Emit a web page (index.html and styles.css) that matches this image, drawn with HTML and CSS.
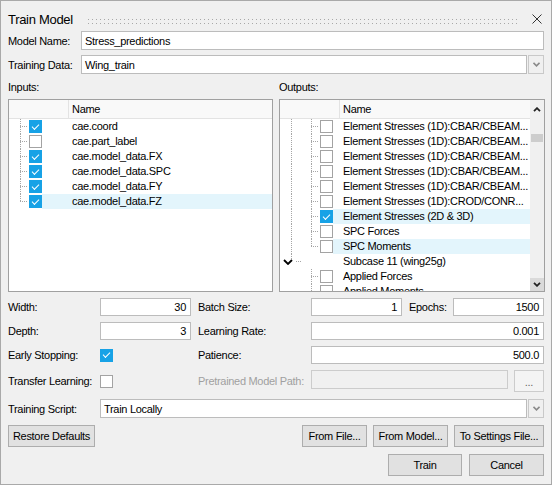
FILE: index.html
```html
<!DOCTYPE html>
<html>
<head>
<meta charset="utf-8">
<title>Train Model</title>
<link rel="stylesheet" href="styles.css">
</head>
<body>
<div class="win">
  <div class="titlebar">
    <span class="title">Train Model</span>
    <span class="grip"></span>
    <svg class="close" width="10" height="10" viewBox="0 0 10 10"><path d="M0.5 0.5L9.5 9.5M9.5 0.5L0.5 9.5" stroke="#333" stroke-width="1" fill="none"/></svg>
  </div>

  <div class="field">
    <span class="flabel">Model Name:</span>
    <div class="tb grow">Stress_predictions</div>
  </div>
  <div class="field">
    <span class="flabel">Training Data:</span>
    <div class="tb grow">Wing_train</div>
    <div class="drop"><svg width="7" height="5" viewBox="0 0 7 5"><path d="M0.5 0.8L3.5 3.8L6.5 0.8" stroke="#8a8a8a" stroke-width="1.6" fill="none"/></svg></div>
  </div>

  <div class="lists">
    <div class="col in">
      <div class="cap">Inputs:</div>
      <div class="table">
        <div class="tmain">
          <div class="thead"><span class="hgut"></span><span class="hname">Name</span></div>
          <div class="row"><span class="g in-leaf"><span class="cb on"></span><span class="fill"></span></span><span class="txt">cae.coord</span></div>
          <div class="row"><span class="g in-leaf"><span class="cb"></span><span class="fill"></span></span><span class="txt">cae.part_label</span></div>
          <div class="row"><span class="g in-leaf"><span class="cb on"></span><span class="fill"></span></span><span class="txt">cae.model_data.FX</span></div>
          <div class="row"><span class="g in-leaf"><span class="cb on"></span><span class="fill"></span></span><span class="txt">cae.model_data.SPC</span></div>
          <div class="row"><span class="g in-leaf"><span class="cb on"></span><span class="fill"></span></span><span class="txt">cae.model_data.FY</span></div>
          <div class="row sel"><span class="g in-last"><span class="cb on"></span><span class="fill"></span></span><span class="txt">cae.model_data.FZ</span></div>
        </div>
      </div>
    </div>
    <div class="col out">
      <div class="cap">Outputs:</div>
      <div class="table">
        <div class="tmain">
          <div class="thead"><span class="hgut"></span><span class="hname">Name</span></div>
          <div class="row"><span class="g o-leaf"><span class="cb"></span><span class="fill"></span></span><span class="txt">Element Stresses (1D):CBAR/CBEAM...</span></div>
          <div class="row"><span class="g o-leaf"><span class="cb"></span><span class="fill"></span></span><span class="txt">Element Stresses (1D):CBAR/CBEAM...</span></div>
          <div class="row"><span class="g o-leaf"><span class="cb"></span><span class="fill"></span></span><span class="txt">Element Stresses (1D):CBAR/CBEAM...</span></div>
          <div class="row"><span class="g o-leaf"><span class="cb"></span><span class="fill"></span></span><span class="txt">Element Stresses (1D):CBAR/CBEAM...</span></div>
          <div class="row"><span class="g o-leaf"><span class="cb"></span><span class="fill"></span></span><span class="txt">Element Stresses (1D):CBAR/CBEAM...</span></div>
          <div class="row"><span class="g o-leaf"><span class="cb"></span><span class="fill"></span></span><span class="txt">Element Stresses (1D):CROD/CONR...</span></div>
          <div class="row sel"><span class="g o-leaf"><span class="cb on"></span><span class="fill"></span></span><span class="txt">Element Stresses (2D &amp; 3D)</span></div>
          <div class="row"><span class="g o-leaf"><span class="cb"></span><span class="fill"></span></span><span class="txt">SPC Forces</span></div>
          <div class="row sel"><span class="g o-last"><span class="cb"></span><span class="fill"></span></span><span class="txt">SPC Moments</span></div>
          <div class="row"><span class="g o-sub"><svg class="chev" width="10" height="6" viewBox="0 0 10 6"><path d="M1 1L5 5L9 1" stroke="#000" stroke-width="1.8" fill="none"/></svg></span><span class="txt">Subcase 11 (wing25g)</span></div>
          <div class="row"><span class="g o-leaf2"><span class="cb"></span><span class="fill"></span></span><span class="txt">Applied Forces</span></div>
          <div class="row"><span class="g o-leaf2"><span class="cb"></span><span class="fill"></span></span><span class="txt">Applied Moments</span></div>
        </div>
        <div class="sbar">
          <div class="sb-up"><svg width="8" height="5" viewBox="0 0 8 5"><path d="M1 4.2L4 1.2L7 4.2" stroke="#222" stroke-width="1.8" fill="none"/></svg></div>
          <div class="sb-gap"></div>
          <div class="sb-thumb"></div>
          <div class="sb-fill"></div>
          <div class="sb-down"><svg width="8" height="5" viewBox="0 0 8 5"><path d="M1 0.8L4 3.8L7 0.8" stroke="#222" stroke-width="1.8" fill="none"/></svg></div>
        </div>
      </div>
    </div>
  </div>

  <div class="params">
    <span class="plabel">Width:</span>
    <div class="tb num">30</div>
    <span class="plabel mid">Batch Size:</span>
    <div class="rcell">
      <div class="tb num w91">1</div>
      <span class="eplabel">Epochs:</span>
      <div class="tb num w91 push">1500</div>
    </div>

    <span class="plabel">Depth:</span>
    <div class="tb num">3</div>
    <span class="plabel mid">Learning Rate:</span>
    <div class="tb num">0.001</div>

    <span class="plabel">Early Stopping:</span>
    <div class="cbcell"><span class="cb on"></span></div>
    <span class="plabel mid">Patience:</span>
    <div class="tb num">500.0</div>

    <span class="plabel">Transfer Learning:</span>
    <div class="cbcell"><span class="cb"></span></div>
    <span class="plabel mid dis">Pretrained Model Path:</span>
    <div class="rcell top">
      <div class="tb grow disabled"></div>
      <div class="btn browse">...</div>
    </div>
  </div>

  <div class="field script">
    <span class="flabel wide">Training Script:</span>
    <div class="tb grow">Train Locally</div>
    <div class="drop"><svg width="7" height="5" viewBox="0 0 7 5"><path d="M0.5 0.8L3.5 3.8L6.5 0.8" stroke="#8a8a8a" stroke-width="1.6" fill="none"/></svg></div>
  </div>

  <div class="btnrow">
    <div class="btn b-restore">Restore Defaults</div>
    <div class="spacer"></div>
    <div class="btn b-file">From File...</div>
    <div class="btn b-model">From Model...</div>
    <div class="btn b-settings">To Settings File...</div>
  </div>
  <div class="btnrow end">
    <div class="btn b-train">Train</div>
    <div class="btn b-cancel">Cancel</div>
  </div>
</div>
</body>
</html>
```
FILE: styles.css
```css
* { box-sizing: border-box; }
html, body { margin: 0; padding: 0; background: #f0f0f0; }
body {
  font-family: "Liberation Sans", Arial, sans-serif;
  font-size: 11px;
  letter-spacing: -0.3px;
  color: #000;
}
.win {
  width: 552px;
  height: 485px;
  border: 1px solid #a9a9a9;
  padding: 6px 7px 0 7px;
  background: #f0f0f0;
  display: flex;
  flex-direction: column;
}
.titlebar { height: 24px; display: flex; align-items: center; flex: none; }
.title { font-size: 13px; width: 80px; flex: none; }
.grip {
  flex: 1;
  height: 5px;
  margin-top: 4px;
  background-image:
    repeating-linear-gradient(to right, #a8a8a8 0 1px, transparent 1px 4px),
    repeating-linear-gradient(to right, #a8a8a8 0 1px, transparent 1px 4px);
  background-size: 100% 1px, 100% 1px;
  background-position: 0 0, 0 4px;
  background-repeat: no-repeat;
}
.close { margin-left: 14px; margin-right: 2px; flex: none; }

.field { display: flex; height: 19px; flex: none; }
.field + .field { margin-top: 5px; }
.flabel { width: 73px; flex: none; display: flex; align-items: center; white-space: nowrap; }
.flabel.wide { width: 92px; }
.tb {
  background: #fff;
  border: 1px solid #bcbcbc;
  padding: 0 3px;
  display: flex;
  align-items: center;
  white-space: nowrap;
  overflow: hidden;
}
.grow { flex: 1; min-width: 0; }
.drop {
  width: 16px;
  margin-left: 1px;
  border: 1px solid #c9c9c9;
  background: #f0f0f0;
  display: flex;
  align-items: center;
  justify-content: center;
  flex: none;
}

.lists { display: flex; gap: 6px; margin-top: 6px; flex: none; }
.col { display: flex; flex-direction: column; }
.col.in { width: 265px; flex: none; }
.col.out { flex: 1; min-width: 0; margin-right: -1px; }
.cap { height: 15px; line-height: 15px; margin-bottom: 4px; }
.table {
  height: 193px;
  border: 1px solid #a0a0a0;
  background: #fff;
  display: flex;
}
.tmain { flex: 1; min-width: 0; display: flex; flex-direction: column; overflow: hidden; }
.thead {
  height: 19px;
  flex: none;
  display: flex;
  background: #f9f9f9;
  border-bottom: 1px solid #e3e3e3;
}
.hgut { width: 60px; flex: none; border-right: 1px solid #e3e3e3; }
.hname { padding-left: 3px; display: flex; align-items: center; }
.row { height: 15px; flex: none; display: flex; align-items: center; }
.row.sel .txt, .row.sel .fill { background: #e3f5fc; }
.fill { flex: 1; align-self: stretch; }
.txt {
  flex: 1;
  min-width: 0;
  padding-left: 3px;
  line-height: 15px;
  white-space: nowrap;
  overflow: hidden;
  text-overflow: ellipsis;
}
.g {
  width: 60px;
  height: 15px;
  flex: none;
  display: flex;
  align-items: center;
  background-repeat: no-repeat;
}
.in-leaf, .in-last, .o-leaf, .o-last, .o-sub, .o-leaf2 {
  --dv: repeating-linear-gradient(to bottom, #a6a6a6 0 1px, transparent 1px 2px);
  --dh: repeating-linear-gradient(to right, #a6a6a6 0 1px, transparent 1px 2px);
}
.in-leaf {
  background-image: var(--dv), var(--dh);
  background-size: 1px 15px, 8px 1px;
  background-position: 11px 0, 11px 7px;
}
.in-last {
  background-image: var(--dv), var(--dh);
  background-size: 1px 8px, 8px 1px;
  background-position: 11px 0, 11px 7px;
}
.in-leaf .cb, .in-last .cb { margin-left: 20px; }
.o-leaf {
  background-image: var(--dv), var(--dv), var(--dh);
  background-size: 1px 15px, 1px 15px, 8px 1px;
  background-position: 11px 0, 31px 0, 31px 7px;
}
.o-last {
  background-image: var(--dv), var(--dv), var(--dh);
  background-size: 1px 15px, 1px 8px, 8px 1px;
  background-position: 11px 0, 31px 0, 31px 7px;
}
.o-sub {
  background-image: var(--dv), var(--dh);
  background-size: 1px 6px, 6px 1px;
  background-position: 11px 0, 16px 7px;
}
.o-leaf2 {
  background-image: var(--dv), var(--dh);
  background-size: 1px 15px, 8px 1px;
  background-position: 31px 0, 31px 7px;
}
.o-leaf .cb, .o-last .cb, .o-leaf2 .cb { margin-left: 40px; }
.chev { margin-left: 3px; }

.cb {
  width: 13px;
  height: 13px;
  flex: none;
  border: 1px solid #a3a3a3;
  background: #fff;
  display: flex;
  align-items: center;
  justify-content: center;
}
.cb.on { background: #17a2e6; border-color: #17a2e6; }
.cb.on::after {
  content: "";
  width: 6px;
  height: 3px;
  margin-top: -2px;
  border-left: 1.5px solid #fff;
  border-bottom: 1.5px solid #fff;
  transform: rotate(-45deg);
}

.sbar { width: 14px; flex: none; background: #f0f0f0; display: flex; flex-direction: column; }
.sb-up { height: 18px; display: flex; align-items: center; justify-content: center; }
.sb-gap { height: 16px; }
.sb-thumb { height: 8px; background: #cdcdcd; margin: 0 1px; }
.sb-fill { flex: 1; }
.sb-down { height: 13px; background: #dadada; display: flex; align-items: center; justify-content: center; }

.params {
  display: grid;
  grid-template-columns: 92px 91px 120px 1fr;
  row-gap: 6px;
  margin-top: 6px;
  flex: none;
  align-items: center;
}
.params > .tb { height: 18px; }
.plabel { display: flex; align-items: center; white-space: nowrap; }
.plabel.mid { padding-left: 7px; }
.plabel.dis { color: #a0a0a0; }
.num { justify-content: flex-end; padding-right: 4px; }
.rcell { display: flex; align-items: center; height: 18px; }
.rcell.top { align-items: flex-start; height: 22px; }
.rcell > .tb { height: 18px; }
.w91 { width: 91px; flex: none; }
.eplabel { margin-left: 7px; }
.push { margin-left: auto; }
.cbcell { display: flex; align-items: center; }
.disabled { background: #f0f0f0; border-color: #cccccc; height: 19px !important; }
.btn {
  height: 22px;
  background: #e1e1e1;
  border: 1px solid #adadad;
  display: flex;
  align-items: center;
  justify-content: center;
  white-space: nowrap;
  flex: none;
}
.browse {
  width: 30px;
  margin-left: 6px;
  background: #f4f4f4;
  border-color: #cccccc;
  color: #666;
  align-items: flex-end;
  padding-bottom: 3px;
}
.field.script { margin-top: 7px; }
.btnrow { display: flex; height: 22px; margin-top: 7px; gap: 6px; flex: none; }
.btnrow.end { justify-content: flex-end; gap: 7px; }
.spacer { flex: 1; }
.b-restore { width: 87px; }
.b-file { width: 65px; }
.b-model { width: 75px; }
.b-settings { width: 90px; }
.b-train { width: 74px; }
.b-cancel { width: 75px; }
```
